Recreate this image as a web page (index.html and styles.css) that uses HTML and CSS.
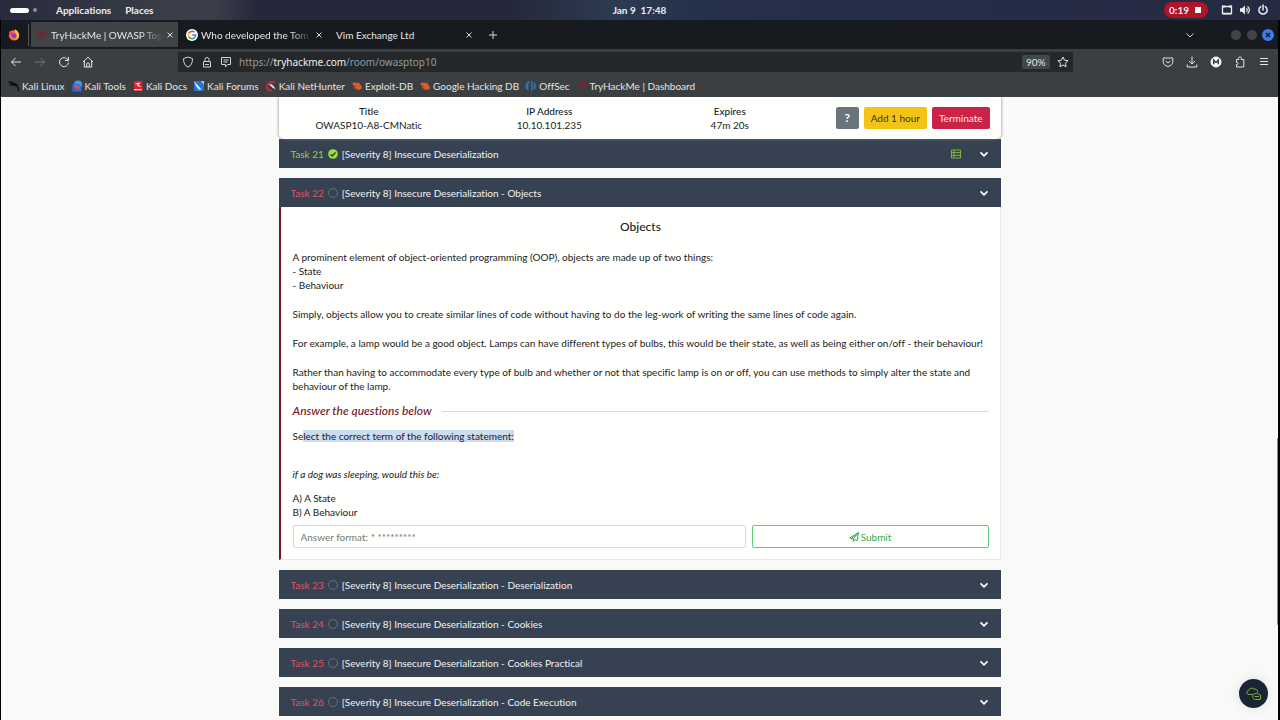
FILE: index.html
```
<!DOCTYPE html>
<html lang="en">
<head>
    <meta charset="UTF-8">
    <meta name="viewport" content="width=device-width, initial-scale=1.0">
    <title>TryHackMe | OWASP Top 10</title>
    <link rel="stylesheet" href="styles.css">
</head>
<body>
    <header class="desktop-bar">
        <div class="desktop-left">
            <span class="workspace-active"></span>
            <span class="workspace-dot"></span>
            <button class="desktop-menu first">Applications</button>
            <button class="desktop-menu">Places</button>
        </div>
        <div class="clock">Jan 9&nbsp; 17:48</div>
        <div class="desktop-right">
            <button class="recording">0:19 <span class="stop"></span></button>
            <svg class="icon-sm" viewBox="0 0 12 12"><path d="M1.5 2.5h9v7h-9z" fill="none" stroke="#eee" stroke-width="1.3"/><path d="M1 1.5h3v2H1zM8 1.5h3v2H8zM2 9h8v1.5H2z" fill="#eee"/></svg>
            <svg class="icon-sm" viewBox="0 0 12 12"><path d="M1 4.3h2L6 1.5v9L3 7.7H1z" fill="#eee"/><path d="M7.5 4.2q1.4 1.8 0 3.6M8.6 2.3q3.6 3.7 0 7.4" fill="none" stroke="#eee" stroke-width="1.2"/></svg>
            <svg class="icon-sm" viewBox="0 0 12 12"><path d="M3.7 2.6a4.1 4.1 0 1 0 4.6 0M6 1v5" fill="none" stroke="#eee" stroke-width="1.5" stroke-linecap="round"/></svg>
        </div>
    </header>

    <div class="browser">
        <div class="tab-bar">
            <div class="pinned">
                <svg class="icon-sm" viewBox="0 0 12 12"><circle cx="6" cy="6.4" r="5.1" fill="#ff7139"/><path d="M7 .3c2.600 1.500 4.300 3.500 4.100 6.500-.6 3-2.600 4.600-5.100 4.600 3-1.200 3.800-3.400 2.600-5.800C7.800 4 6.600 2.500 7 .3z" fill="#ffc83a"/><circle cx="6" cy="6.700" r="2.300" fill="#7542c9"/><path d="M1 5c0-1.600.6-2.500 1.200-3.200.2.900.7 1.300 1.600 1.500 1 0 1.700.4 2.200 1-1.500.1-2.300.9-2.500 2.300C2.600 6 1.600 5.900 1 5z" fill="#ff3d58"/></svg>
            </div>
            <div class="tab active">
                <svg class="icon-sm" viewBox="0 0 12 12"><path d="M3 4a3 3 0 0 1 6 0 2 2 0 0 1 0 4H3a2 2 0 0 1 0-4z" fill="#642e38"/><path d="M2 10.500h8" stroke="#642e38" stroke-dasharray="2 1"/></svg>
                <span class="tab-title fade">TryHackMe | OWASP Top</span>
                <button class="tab-close" aria-label="Close tab"><svg viewBox="0 0 8 8"><path d="M1.500 1.500l5 5m0-5l-5 5"/></svg></button>
            </div>
            <div class="tab">
                <svg class="icon-sm" viewBox="0 0 12 12"><circle cx="6" cy="6" r="6" fill="#fff"/><g fill="none" stroke-width="1.500"><path d="M8.500 3.300A3.700 3.700 0 0 0 2.700 4.400" stroke="#ea4335"/><path d="M2.700 4.400a3.700 3.700 0 0 0 0 3.300" stroke="#fbbc05"/><path d="M2.700 7.700a3.700 3.700 0 0 0 5.600 1.200" stroke="#34a853"/><path d="M8.300 8.900A3.700 3.700 0 0 0 9.700 6H6.200" stroke="#4285f4"/></g></svg>
                <span class="tab-title fade">Who developed the Tom</span>
                <button class="tab-close" aria-label="Close tab"><svg viewBox="0 0 8 8"><path d="M1.500 1.500l5 5m0-5l-5 5"/></svg></button>
            </div>
            <div class="tab">
                <span class="tab-title">Vim Exchange Ltd</span>
                <button class="tab-close" aria-label="Close tab"><svg viewBox="0 0 8 8"><path d="M1.500 1.500l5 5m0-5l-5 5"/></svg></button>
            </div>
            <button class="new-tab" aria-label="New tab"><svg viewBox="0 0 10 10"><path d="M5 1v8M1 5h8"/></svg></button>
            <div class="window-controls">
                <button class="all-tabs" aria-label="List all tabs"><svg viewBox="0 0 10 10"><path d="M1.500 3.500L5 7l3.500-3.500"/></svg></button>
                <button class="window-btn" aria-label="Minimize"></button>
                <button class="window-btn" aria-label="Maximize"></button>
                <button class="window-btn close" aria-label="Close"><svg viewBox="0 0 12 12"><path d="M4 4l4 4m0-4L4 8"/></svg></button>
            </div>
        </div>

        <div class="nav-bar">
            <div class="nav-left">
                <button class="nav-btn" aria-label="Back"><svg viewBox="0 0 12 12"><path d="M11 6H1.500M5.500 2l-4 4 4 4"/></svg></button>
                <button class="nav-btn dim" aria-label="Forward"><svg viewBox="0 0 12 12"><path d="M1 6h9.500M6.500 2l4 4-4 4"/></svg></button>
                <button class="nav-btn" aria-label="Reload"><svg viewBox="0 0 12 12"><path d="M10 4A4.500 4.500 0 1 0 10.500 6.500M10.500 1v3.500H7"/></svg></button>
                <button class="nav-btn" aria-label="Home"><svg viewBox="0 0 12 12"><path d="M1 6l5-4.800L11 6M2.300 5v6h7.400V5M4.700 11V7.500q1.300-1.500 2.600 0V11"/></svg></button>
            </div>
            <div class="url-bar">
                <svg class="icon-sm line" viewBox="0 0 12 12"><path d="M6 1l4.500 1.500C10.600 7 9 9.800 6 11.200 3 9.800 1.400 7 1.500 2.500z"/></svg>
                <svg class="icon-sm line" viewBox="0 0 12 12"><path d="M2.500 5.500h7v5.500h-7zM4 5.500v-2a2 2 0 0 1 4 0v2M4 8.500h4"/></svg>
                <svg class="icon-sm line" viewBox="0 0 12 12"><path d="M1.500 1.500h9v7H7.500L5.500 11V8.500h-4zM3.500 4h5M3.500 6h4"/></svg>
                <div class="url">https://<b>tryhackme.com</b>/room/owasptop10</div>
                <button class="zoom-level">90%</button>
                <button class="nav-btn" aria-label="Bookmark"><svg viewBox="0 0 12 12"><path d="M6 1l1.500 3.200 3.500.5-2.500 2.500.6 3.500L6 9l-3.100 1.700.6-3.500L1 4.700l3.500-.5z"/></svg></button>
            </div>
            <div class="nav-right">
                <button class="nav-btn" aria-label="Pocket"><svg viewBox="0 0 12 12"><path d="M1.200 2h9.600v3.500a4.800 4.800 0 0 1-9.600 0zM3.700 4.800L6 7l2.300-2.200"/></svg></button>
                <button class="nav-btn" aria-label="Downloads"><svg viewBox="0 0 12 12"><path d="M6 .5v7M3 5l3 3 3-3M1.200 8.500V11h9.600V8.500"/></svg></button>
                <button class="nav-btn" aria-label="Account"><svg viewBox="0 0 12 12"><circle cx="6" cy="6" r="5" fill="#fff" stroke="#fff"/><path d="M3.700 8.200V4L6 6.400 8.300 4v4.200" class="dark"/></svg></button>
                <button class="nav-btn" aria-label="Extensions"><svg viewBox="0 0 12 12"><path d="M2.500 3.500h2.300c-.6-1.800.2-2.700 1.200-2.700s1.800.9 1.200 2.700h2.600V11h-7.300V8.500c2 .4 2-2.400 0-2z"/></svg></button>
                <button class="nav-btn" aria-label="Menu"><svg viewBox="0 0 12 12"><path d="M2 2.500h8M2 5.500h8M2 8.500h8"/></svg></button>
            </div>
        </div>

        <nav class="bookmarks">
            <a href="#"><svg class="icon-sm" viewBox="0 0 12 12"><path d="M.5 2l5 1.200 3 1.600 1.500 3 1 3.200M1.500 5l3-.8L8 6M4 3.500L3 1.500" fill="none" stroke="#0c0d0e" stroke-width="1.400"/></svg>Kali Linux</a>
            <a href="#"><svg class="icon-sm" viewBox="0 0 12 12"><circle cx="7" cy="4.500" r="4" fill="#3b9cf0"/><path d="M1.500 4h6l3 3v4.500h-9z" fill="#2a6fd6"/><path d="M3 5.500c3-2 4 1 6 1.500L7.500 9 4 8z" fill="#ef4b4e"/></svg>Kali Tools</a>
            <a href="#"><svg class="icon-sm" viewBox="0 0 12 12"><path d="M2 1h8.500v10H2z" fill="#d8262e"/><path d="M3.500 4l4-1-2 2.500 3 1M2 9.700h8" fill="none" stroke="#fff"/></svg>Kali Docs</a>
            <a href="#"><svg class="icon-sm" viewBox="0 0 12 12"><path d="M1 1h10v10H1z" fill="#2474d8"/><path d="M1 1l8 9-3-1 1 2.500L3 6z" fill="#e9f2fc"/><path d="M8 1l3 4V1z" fill="#a7cbf2"/></svg>Kali Forums</a>
            <a href="#"><svg class="icon-sm" viewBox="0 0 12 12"><path d="M10 2C4 1 .8 5 2.500 8.500c1 2 3 2.500 4.500 2" fill="none" stroke="#c5293c" stroke-width="2"/><path d="M4 4.500c3-1 4.500 1 6.500 5L7.500 7.500z" fill="#f3f3f3"/></svg>Kali NetHunter</a>
            <a href="#"><svg class="icon-sm" viewBox="0 0 12 12"><path d="M1 3l3-.5 4 .5 2 2.500 1 3-3 1.500-4-1.500-1.500-3z" fill="#e2582b"/><path d="M2 8l3-2M8 3l1.500-1.500M6 9l-1 1.500" stroke="#9f3a22"/></svg>Exploit-DB</a>
            <a href="#"><svg class="icon-sm" viewBox="0 0 12 12"><path d="M1 3l3-.5 4 .5 2 2.500 1 3-3 1.500-4-1.500-1.500-3z" fill="#e2582b"/><path d="M2 8l3-2M8 3l1.500-1.500M6 9l-1 1.500" stroke="#9f3a22"/></svg>Google Hacking DB</a>
            <a href="#"><svg class="icon-sm" viewBox="0 0 12 12"><path d="M5 1a5 5 0 0 0-1.500 9.600V4zM6 1v10l1.500-.3V1.200zM8.500 1.700v8.600a5 5 0 0 0 0-8.600z" fill="#2b73bd"/></svg>OffSec</a>
            <a href="#"><svg class="icon-sm" viewBox="0 0 12 12"><path d="M3 3.500a3 3 0 0 1 6 0 2 2 0 0 1 0 4H3a2 2 0 0 1 0-4z" fill="#642e38"/><path d="M2 10h8" stroke="#642e38" stroke-dasharray="2 1"/></svg>TryHackMe | Dashboard</a>
        </nav>

        <main class="page">
            <div class="room">
                <section class="machine">
                    <div><strong>Title</strong>OWASP10-A8-CMNatic</div>
                    <div><strong>IP Address</strong>10.10.101.235</div>
                    <div><strong>Expires</strong>47m 20s</div>
                    <div class="machine-actions">
                        <button class="btn btn-help">?</button>
                        <button class="btn btn-add">Add 1 hour</button>
                        <button class="btn btn-end">Terminate</button>
                    </div>
                </section>

                <section class="task">
                    <button class="task-header">
                        <span class="task-no done">Task 21</span>
                        <svg class="status" viewBox="0 0 10 10"><circle cx="5" cy="5" r="4.800" fill="#a0e234"/><path d="M2.600 5.200l1.700 1.700 3.200-3.400" fill="none" stroke="#2f3b4d" stroke-width="1.400"/></svg>
                        <span>[Severity 8] Insecure Deserialization</span>
                        <svg class="split" viewBox="0 0 10 10"><path d="M.5 1h9v8h-9zM.5 3.600h9M.5 6.300h9M3 1v8" fill="none" stroke="#7fb53c"/></svg>
                        <svg class="chevron" viewBox="0 0 10 10"><path d="M1.500 3.300L5 6.800l3.500-3.500"/></svg>
                    </button>
                </section>

                <section class="task open">
                    <button class="task-header">
                        <span class="task-no">Task 22</span>
                        <span class="status ring"></span>
                        <span>[Severity 8] Insecure Deserialization - Objects</span>
                        <svg class="chevron" viewBox="0 0 10 10"><path d="M1.500 3.300L5 6.800l3.500-3.500"/></svg>
                    </button>
                    <div class="task-body">
                        <h2>Objects</h2>
                        <p>A prominent element of object-oriented programming (OOP), objects are made up of two things:<br>- State<br>- Behaviour</p>
                        <p>Simply, objects allow you to create similar lines of code without having to do the leg-work of writing the same lines of code again.</p>
                        <p>For example, a lamp would be a good object. Lamps can have different types of bulbs, this would be their state, as well as being either on/off - their behaviour!</p>
                        <p class="last">Rather than having to accommodate every type of bulb and whether or not that specific lamp is on or off, you can use methods to simply alter the state and<br>behaviour of the lamp.</p>
                        <h3>Answer the questions below</h3>
                        <p class="question">Se<span class="selected">lect the correct term of the following statement:</span></p>
                        <p class="statement"><em>if a dog was sleeping, would this be:</em></p>
                        <label class="options" for="answer">A) A State<br>B) A Behaviour</label>
                        <div class="answer-row">
                            <input id="answer" type="text" placeholder="Answer format: * *********">
                            <button class="submit"><svg viewBox="0 0 10 10"><path d="M.6 6L9.400.7 8.200 8.800 5.800 7.600 4.300 9.400V7L.6 6zM4.300 7L9.400.7M2.600 6.300L9.400.7"/></svg>Submit</button>
                        </div>
                    </div>
                </section>

                <section class="task">
                    <button class="task-header">
                        <span class="task-no">Task 23</span>
                        <span class="status ring"></span>
                        <span>[Severity 8] Insecure Deserialization - Deserialization</span>
                        <svg class="chevron" viewBox="0 0 10 10"><path d="M1.500 3.300L5 6.800l3.500-3.500"/></svg>
                    </button>
                </section>
                <section class="task">
                    <button class="task-header">
                        <span class="task-no">Task 24</span>
                        <span class="status ring"></span>
                        <span>[Severity 8] Insecure Deserialization - Cookies</span>
                        <svg class="chevron" viewBox="0 0 10 10"><path d="M1.500 3.300L5 6.800l3.500-3.500"/></svg>
                    </button>
                </section>
                <section class="task">
                    <button class="task-header">
                        <span class="task-no">Task 25</span>
                        <span class="status ring"></span>
                        <span>[Severity 8] Insecure Deserialization - Cookies Practical</span>
                        <svg class="chevron" viewBox="0 0 10 10"><path d="M1.500 3.300L5 6.800l3.500-3.500"/></svg>
                    </button>
                </section>
                <section class="task">
                    <button class="task-header">
                        <span class="task-no">Task 26</span>
                        <span class="status ring"></span>
                        <span>[Severity 8] Insecure Deserialization - Code Execution</span>
                        <svg class="chevron" viewBox="0 0 10 10"><path d="M1.500 3.300L5 6.800l3.500-3.500"/></svg>
                    </button>
                </section>
            </div>
            <span class="scroll-thumb"></span>
            <button class="chat" aria-label="Open machine chat"><svg viewBox="0 0 16 16"><path d="M6.500 8.500H3a2 2 0 0 1-.3-4A3 3 0 0 1 8 3.300a2.500 2.500 0 0 1 3.500 3M7.500 8a5 3.300 0 0 1 7 1v4.500H9.300C6.500 13.500 6 10 7.500 8zM8.500 10.500h4.500"/></svg></button>
        </main>
    </div>
</body>
</html>
```
FILE: styles.css
```
* {
    box-sizing: border-box;
}
body {
    margin: 0;
    height: 100vh;
    display: flex;
    flex-direction: column;
    overflow: hidden;
    background: #000;
    color: #222;
    font: 10px/14px Lato, sans-serif;
    font-variant-ligatures: none;
}
button, input {
    font: inherit;
    font-variant-ligatures: none;
    color: inherit;
    margin: 0;
    padding: 0;
    border: none;
    background: none;
}
button {
    cursor: pointer;
}
svg {
    display: block;
    flex: none;
}
.icon-sm {
    width: 12px;
    height: 12px;
}

/* desktop panel */
.desktop-bar {
    display: grid;
    grid-template-columns: 1fr auto 1fr;
    align-items: center;
    height: 20px;
    flex: none;
    padding: 0 11px 0 10px;
    background: linear-gradient(90deg, #262a3d 0%, #3c3f48 14%, #3a3d48 17%, #25283b 20%, #25283b 40%, #2c3b52 48%, #25304a 55%, #252a42 100%);
    color: #eee;
    font-weight: bold;
}
.desktop-left, .desktop-right {
    display: flex;
    align-items: center;
}
.workspace-active {
    width: 19px;
    height: 5px;
    border-radius: 3px;
    background: #fff;
}
.workspace-dot {
    width: 4px;
    height: 4px;
    margin-left: 4px;
    border-radius: 50%;
    background: #8b8e98;
}
.desktop-menu {
    margin-left: 14px;
}
.desktop-menu.first {
    margin-left: 19px;
}
.desktop-right {
    justify-content: flex-end;
    gap: 6px;
}
.recording {
    display: flex;
    align-items: center;
    gap: 6px;
    height: 16px;
    margin-right: 7px;
    padding: 0 7px 0 5px;
    border-radius: 8px;
    background: #b0142b;
}
.stop {
    width: 6px;
    height: 6px;
    background: #fff;
}

/* browser window */
.browser {
    flex: 1;
    min-height: 0;
    display: flex;
    flex-direction: column;
    margin: 0 2px 0 1px;
    background: #3b3f42;
    color: #e4e5e6;
}
.tab-bar {
    display: flex;
    align-items: center;
    height: 29px;
    flex: none;
    background: #171b1f;
}
.pinned {
    display: flex;
    align-items: center;
    height: 22px;
    margin-right: 2px;
    padding: 0 8px 0 7px;
    border-right: 1px solid #565a5d;
}
.tab {
    display: flex;
    align-items: center;
    gap: 3px;
    width: 147px;
    height: 25px;
    margin-right: 3px;
    padding: 0 5px;
}
.tab.active {
    background: #404447;
}
.tab-title {
    flex: 1;
    white-space: nowrap;
}
.tab-title.fade {
    mask-image: linear-gradient(90deg, #000 80%, transparent);
}
.tab-close svg {
    width: 8px;
    height: 8px;
}
.tab-close svg, .new-tab svg, .all-tabs svg {
    fill: none;
    stroke: #d8dadb;
}
.new-tab {
    margin-left: 7px;
}
.new-tab svg, .all-tabs svg {
    width: 10px;
    height: 10px;
}
.window-controls {
    display: flex;
    align-items: center;
    gap: 4px;
    margin-left: auto;
    padding-right: 4px;
}
.all-tabs {
    margin-right: 31px;
}
.window-btn {
    width: 12px;
    height: 12px;
    border: 1px solid #171b1f;
    border-radius: 50%;
    background: #41454a;
}
.window-btn.close {
    border: none;
    background: #3f7bea;
}
.window-btn svg {
    fill: none;
    stroke: #10182b;
    stroke-width: 1.5;
}
.nav-bar {
    display: flex;
    align-items: center;
    height: 26px;
    flex: none;
    padding: 0 8px 0 9px;
}
.nav-left, .nav-right {
    display: flex;
    gap: 12px;
}
.nav-left {
    width: 168px;
    flex: none;
}
.nav-right {
    flex: 1;
    justify-content: flex-end;
}
.nav-btn svg {
    width: 12px;
    height: 12px;
    fill: none;
    stroke: #e4e5e6;
}
.nav-btn .dark {
    stroke: #3b3f42;
    stroke-width: 1.5;
}
.nav-btn.dim {
    opacity: 0.35;
}
.url-bar {
    display: flex;
    align-items: center;
    gap: 7px;
    flex: none;
    width: 71%;
    height: 20px;
    padding: 0 4px;
    background: #24282b;
}
.line {
    fill: none;
    stroke: #d0d2d3;
}
.url {
    flex: 1;
    color: #969a9d;
    font-family: "Noto Sans", sans-serif;
}
.url b {
    color: #f0f0f0;
    font-weight: normal;
}
.zoom-level {
    height: 14px;
    padding: 0 4px;
    border-radius: 2px;
    background: #43474a;
}
.bookmarks {
    display: flex;
    gap: 6px;
    height: 22px;
    flex: none;
    padding: 4px 7px 0;
}
.bookmarks a {
    display: flex;
    align-items: center;
    gap: 2px;
    height: 14px;
    color: inherit;
    text-decoration: none;
    white-space: nowrap;
}

/* room page */
.page {
    position: relative;
    flex: 1;
    min-height: 0;
    overflow: hidden;
    background: #f9faf7;
    color: #222;
}
.room {
    width: 722px;
    max-width: 100%;
    margin: 0 auto;
}
.machine {
    position: relative;
    display: grid;
    grid-template-columns: repeat(4, 1fr);
    align-items: center;
    height: 42px;
    border-radius: 0 0 5px 5px;
    background: #fffffd;
    box-shadow: 0 0 3px #777;
    text-align: center;
}
.machine strong {
    display: block;
    font-weight: 500;
}
.machine-actions {
    display: flex;
    justify-content: flex-end;
    gap: 5px;
    padding-right: 11px;
}
.btn {
    height: 22px;
    padding: 0 7px;
    border-radius: 2px;
}
.btn-help {
    width: 23px;
    background: #69757b;
    color: #fff;
    font-size: 12px;
    font-weight: bold;
}
.btn-add {
    background: #f3c316;
    color: #3a3520;
}
.btn-end {
    background: #ca2348;
    color: #fbe6ea;
}
.task {
    margin-bottom: 10px;
}
.task-header {
    display: flex;
    align-items: center;
    width: 100%;
    height: 29px;
    padding: 0 12px;
    background: #364152;
    color: #f2f3f4;
}
.task-no {
    color: #e05260;
}
.task-no.done {
    color: #92d62f;
}
.status {
    width: 10px;
    height: 10px;
    margin: 0 4px;
}
.ring {
    border: 1px solid #66717b;
    border-radius: 50%;
}
.chevron {
    width: 10px;
    height: 10px;
    margin-left: auto;
    fill: none;
    stroke: #fff;
    stroke-width: 1.7;
}
.split {
    width: 10px;
    height: 10px;
    margin-left: auto;
}
.split + .chevron {
    margin-left: 18px;
}
.task-body {
    padding: 13px 11px 11px 12px;
    border: solid #e6e8e6;
    border-width: 0 1px 1px 0;
    border-left: 2px solid #74162a;
    background: #fffffd;
}
.task-body p {
    margin: 0 0 15px;
}
.task-body h2 {
    margin: 0 0 16px;
    font-size: 12px;
    font-weight: 500;
    text-align: center;
}
.task-body .last {
    margin-bottom: 11px;
}
.task-body h3 {
    display: flex;
    align-items: center;
    gap: 10px;
    margin: 0 0 11px;
    color: #74162a;
    font-size: 12px;
    font-style: italic;
    font-weight: 500;
}
.task-body h3::after {
    content: "";
    flex: 1;
    border-top: 1px solid #d9dcd9;
}
.task-body .question {
    margin-bottom: 24px;
}
.task-body .statement {
    margin-bottom: 10px;
}
.selected {
    background: #cbdcf3;
}
.options {
    display: block;
    margin-bottom: 6px;
}
.answer-row {
    display: grid;
    grid-template-columns: 65fr 34fr;
    gap: 6px;
}
.answer-row input {
    height: 23px;
    padding: 0 7px;
    border: 1px solid #d9dcda;
    border-radius: 2px;
    background: #fffffd;
}
.answer-row input::placeholder {
    color: #777;
}
.submit {
    display: flex;
    align-items: center;
    justify-content: center;
    gap: 2px;
    border: 1px solid #5fcb7c;
    border-radius: 2px;
    color: #36a852;
}
.submit svg {
    width: 10px;
    height: 10px;
    fill: none;
    stroke: #36a852;
}
.scroll-thumb {
    position: absolute;
    top: 341px;
    right: 0;
    width: 1px;
    height: 187px;
    background: #888;
}
.chat {
    position: absolute;
    right: 10px;
    bottom: 12px;
    display: flex;
    align-items: center;
    justify-content: center;
    width: 29px;
    height: 29px;
    border-radius: 50%;
    background: #1a2534;
    box-shadow: 0 0 10px #dcdde2;
}
.chat svg {
    width: 16px;
    height: 16px;
    fill: none;
    stroke: #7faa3e;
}
```
